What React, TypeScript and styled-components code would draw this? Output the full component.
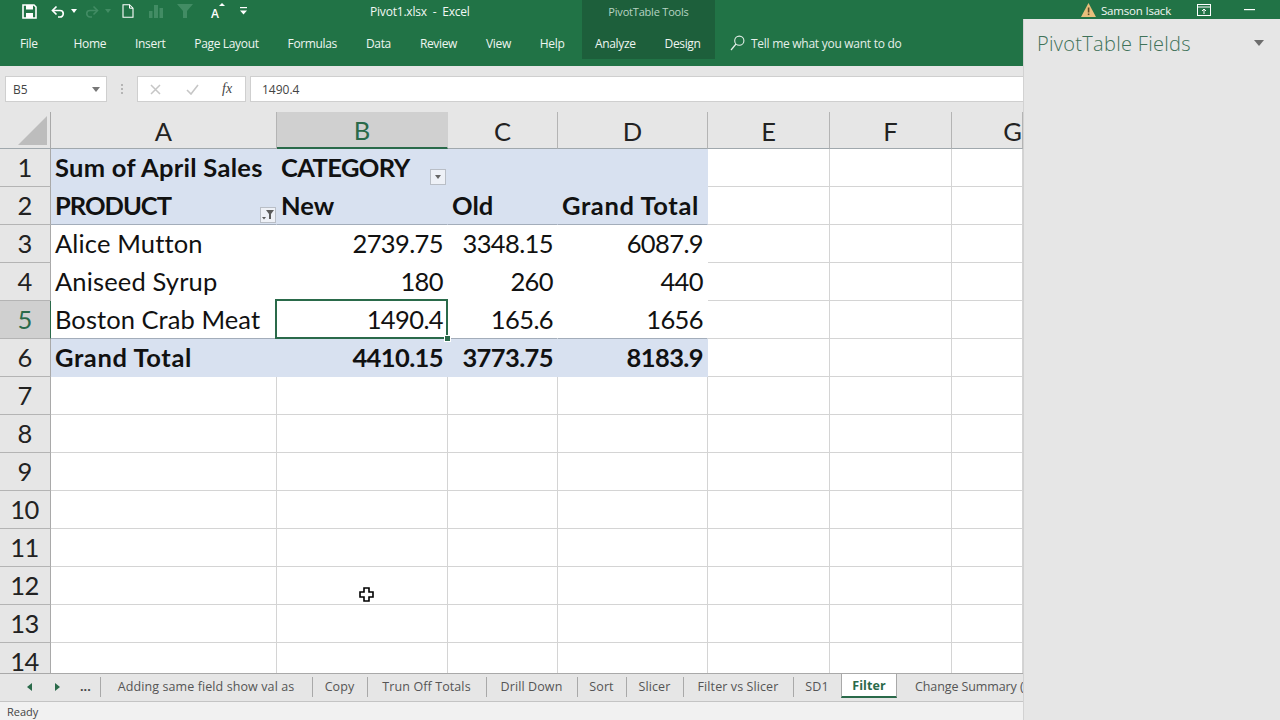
import React from "react";
import styled, { createGlobalStyle } from "styled-components";

const Global = createGlobalStyle`
  html, body { margin: 0; padding: 0; width: 1280px; height: 720px; overflow: hidden; background: #fff; }
  #root { width: 1280px; height: 720px; }
  * { box-sizing: border-box; }
`;

const UI = `"Open Sans", "Noto Sans", sans-serif`;
const SHEET = `Lato, "Liberation Sans", sans-serif`;

const Window = styled.div`
  position: relative; width: 1280px; height: 720px; overflow: hidden;
  display: flex; flex-direction: column; font-family: ${UI};
`;
const Header = styled.header`
  flex: 0 0 66px; display: flex; background: #217346; color: #fff; font-size: 12px;
`;
const HeaderLeft = styled.div`width: 582px; display: flex; flex-direction: column;`;
const HeaderContext = styled.div`
  width: 133px; height: 59px; background: #1d5f3b; display: flex; flex-direction: column;
`;
const HeaderRight = styled.div`flex: 1; display: flex; flex-direction: column;`;
const TopRow = styled.div`height: 22px; display: flex; align-items: center;`;
const TabRow = styled.div`height: 44px; display: flex; align-items: center; padding-bottom: 2px;`;
const Qat = styled.div`display: flex; align-items: center; padding-left: 22px; width: 370px;`;
const QatSlot = styled.span<{ $w: number }>`
  width: ${(p) => p.$w}px; display: flex; align-items: center; height: 22px;
`;
const Title = styled.div`font-size: 12px; letter-spacing: -0.2px; white-space: pre; color: #f2f7f4;`;
const RibbonTab = styled.div<{ $pad?: number }>`
  padding: 0 ${(p) => p.$pad ?? 14.5}px; font-size: 12px; letter-spacing: -0.35px; color: #eef5f0; white-space: nowrap;
`;
const FileTab = styled(RibbonTab)`padding: 0 21.5px 0 20px;`;
const ContextTitle = styled.div`
  height: 20px; margin-top: 1px; display: flex; align-items: center; justify-content: center;
  font-size: 11px; letter-spacing: -0.2px; color: #b7d3c2;
`;
const ContextTabs = styled.div`
  height: 38px; display: flex; align-items: center; padding-top: 6px;
`;
const Search = styled.div`
  display: flex; align-items: center; gap: 6px; padding-left: 15px; font-size: 12px; letter-spacing: -0.27px; color: #e5efe9;
`;
const UserArea = styled.div`
  margin-left: 366px; padding-bottom: 2px; display: flex; align-items: center; font-size: 11.5px; letter-spacing: -0.2px;
`;
const UserName = styled.span`margin: 0 26px 0 5px; color: #f2f7f4;`;
const WindowGap = styled.span`width: 33px;`;

const FormulaBand = styled.div`
  flex: 0 0 46px; background: #e6e6e6; display: flex; align-items: flex-start; padding: 10px 0 0 5px;
`;
const NameBox = styled.div`
  width: 102px; height: 26px; background: #fff; border: 1px solid #cfcfcf; display: flex; align-items: center;
  justify-content: space-between; padding: 0 6px 0 7px; font-size: 12px; color: #444;
`;
const Caret = styled.span`
  width: 0; height: 0; border-left: 4px solid transparent; border-right: 4px solid transparent;
  border-top: 5px solid #777;
`;
const SmallCaret = styled.span`
  width: 0; height: 0; border-left: 3px solid transparent; border-right: 3px solid transparent;
  border-top: 4px solid #666;
`;
const Grip = styled.div`
  width: 30px; height: 26px; display: flex; flex-direction: column; align-items: center; justify-content: center; gap: 2px;
`;
const GripDot = styled.span`width: 2px; height: 2px; background: #b5b5b5;`;
const FxBox = styled.div`
  width: 109px; height: 26px; background: #fff; border: 1px solid #cfcfcf; display: flex; align-items: center;
  padding-left: 12px;
`;
const FxGap = styled.span`width: 25px;`;
const FxGlyph = styled.span`
  font-family: "Liberation Serif", serif; font-style: italic; font-size: 14px; color: #444; margin-left: 23px;
`;
const FormulaInput = styled.div`
  margin-left: 4px; width: 773px; height: 26px; background: #fff; border: 1px solid #cfcfcf; border-right: 0; display: flex; align-items: center;
  padding-left: 11px; font-size: 12px; color: #444;
`;

const Sheet = styled.div`
  flex: 0 0 561px; width: 1023px; overflow: hidden; display: grid;
  grid-template-columns: 51px 226px 171px 110px 150px 122px 122px 71px;
  grid-template-rows: 37px;
  grid-auto-rows: 38px;
  background: #fff; font-family: ${SHEET}; font-size: 25.5px; color: #111;
`;
const Corner = styled.div`
  background: #e6e6e6; border-right: 1px solid #a9a9a9; border-bottom: 1px solid #a0a8ad; display: flex; padding: 4px 3px 0 18px;
`;
const ColHead = styled.div<{ $active?: boolean; $last?: boolean }>`
  background: ${(p) => (p.$active ? "#d0d0d0" : "#e6e6e6")};
  color: ${(p) => (p.$active ? "#2a6a4a" : "#222")};
  border-right: 1px solid ${(p) => (p.$active ? "#d0d0d0" : "#b4b4b4")};
  border-bottom: ${(p) => (p.$active ? "2px solid #2a6a4a" : "1px solid #a0a8ad")};
  display: flex; align-items: center; justify-content: ${(p) => (p.$last ? "flex-end" : "center")};
  padding-top: 1px;
`;
const RowHead = styled.div<{ $active?: boolean }>`
  background: ${(p) => (p.$active ? "#d0d0d0" : "#e6e6e6")};
  color: ${(p) => (p.$active ? "#2a6a4a" : "#222")};
  border-right: 1px solid ${(p) => (p.$active ? "#2a6a4a" : "#a9a9a9")};
  border-bottom: 1px solid #b4b4b4;
  display: flex; align-items: center; justify-content: center; padding-right: 1px; padding-bottom: 1px;
  letter-spacing: -0.6px;
`;
const Cell = styled.div<{
  $pivot?: boolean; $plain?: boolean; $bold?: boolean; $right?: boolean; $under?: boolean; $selected?: boolean; $ls?: number;
}>`
  position: relative; display: flex; align-items: center; white-space: nowrap; padding: 0 4px 2px;
  justify-content: ${(p) => (p.$right ? "flex-end" : "flex-start")};
  font-weight: ${(p) => (p.$bold ? 700 : 400)};
  letter-spacing: ${(p) => p.$ls ?? 0}px;
  background: ${(p) => (p.$pivot ? "#d8e1f0" : "#fff")};
  border-right: 1px solid ${(p) => (p.$pivot || p.$plain ? "transparent" : "#d4d4d4")};
  border-bottom: 1px solid ${(p) => (p.$under ? "#a3adba" : p.$pivot || p.$plain ? "transparent" : "#d4d4d4")};
  ${(p) =>
    p.$selected
      ? `z-index: 2; &::after { content: ""; position: absolute; left: -2px; top: -2px; right: -1px; bottom: -1px; border: 2px solid #2a6a4a; pointer-events: none; }
         &::before { content: ""; position: absolute; right: -3px; bottom: -3px; width: 5px; height: 5px; background: #2a6a4a; border: 1px solid #fff; box-sizing: content-box; margin: -1px; z-index: 3; }`
      : ""}
`;
const FilterButton = styled.span<{ $x: number; $y: number }>`
  position: absolute; right: ${(p) => p.$x}px; bottom: ${(p) => p.$y}px; width: 16px; height: 16px;
  background: #eef1f7; border: 1px solid #b9bec6; display: flex; align-items: center; justify-content: center;
`;
const Cursor = styled.span`
  position: absolute; left: 358px; top: 586px; width: 17px; height: 17px; display: flex; z-index: 3;
`;

const TabsBar = styled.div`
  flex: 0 0 29px; width: 1023px; background: #e6e6e6; border-top: 1px solid #a9a9a9; border-bottom: 1px solid #c4c4c4;
  display: flex; align-items: stretch; overflow: hidden; font-size: 12.5px; letter-spacing: 0.1px; color: #555; padding-bottom: 2px;
`;
const TabNav = styled.div`flex: 0 0 100px; display: flex; align-items: center; padding-left: 27px; gap: 23px;`;
const NavArrow = styled.span<{ $right?: boolean }>`
  width: 0; height: 0; border-top: 4px solid transparent; border-bottom: 4px solid transparent;
  ${(p) => (p.$right ? "border-left: 5px solid #2a6a4a;" : "border-right: 5px solid #2a6a4a;")}
`;
const Dots = styled.span`font-weight: 700; letter-spacing: 0; color: #444; margin-left: -3px;`;
const SheetTab = styled.div<{ $w: number }>`
  flex: 0 0 ${(p) => p.$w}px;
  position: relative; display: flex; align-items: center; justify-content: center; white-space: nowrap;
  &::after { content: ""; position: absolute; left: 0; top: 3px; bottom: 2px; width: 1px; background: #a9a9a9; }
`;
const ActiveTab = styled.div<{ $w: number }>`
  flex: 0 0 ${(p) => p.$w}px; height: 25px; margin-top: -1px; padding-top: 2px; background: #fff; color: #2a6a4a; font-weight: 700;
  display: flex; align-items: center; justify-content: center;
  border-bottom: 2px solid #2a6a4a; border-left: 1px solid #a9a9a9; border-right: 1px solid #a9a9a9;
`;
const LastTab = styled.div`padding-left: 18px; white-space: nowrap; display: flex; align-items: center; letter-spacing: -0.1px;`;
const StatusBar = styled.div`
  flex: 1; background: #f1f1f1; display: flex; align-items: center; padding-left: 7px; font-size: 11px; color: #444;
`;
const Panel = styled.aside`
  position: absolute; left: 1023px; top: 19px; width: 257px; bottom: 0; background: #e6e6e6;
  border-left: 1px solid #d2d2d2; display: flex; justify-content: space-between; align-items: flex-start;
  padding: 10px 16px 0 13px;
`;
const PanelTitle = styled.div`font-size: 20px; font-weight: 300; letter-spacing: 0.3px; color: #3f7259; line-height: 30px;`;
const PanelCaret = styled.span`margin-top: 11px; width: 0; height: 0;
  border-left: 5px solid transparent; border-right: 5px solid transparent; border-top: 6px solid #6d6d6d;`;
const QatLetter = styled.span`font-size: 12px; font-weight: 600; color: #fff; margin-top: 5px;`;

type CellData = { t?: string; bold?: boolean; right?: boolean; ls?: number };
type Row = { n: number; cells: CellData[]; pivot?: boolean; under?: boolean; plain?: boolean };

const NUM = -0.6;
const rows: Row[] = [
  { n: 1, pivot: true, cells: [{ t: "Sum of April Sales", bold: true, ls: 0.28 }, { t: "CATEGORY", bold: true, ls: -0.6 }, {}, {}] },
  { n: 2, pivot: true, under: true, cells: [{ t: "PRODUCT", bold: true, ls: -1 }, { t: "New", bold: true }, { t: "Old", bold: true }, { t: "Grand Total", bold: true, ls: 0.6 }] },
  { n: 3, plain: true, cells: [{ t: "Alice Mutton", ls: 0.15 }, { t: "2739.75", right: true, ls: NUM }, { t: "3348.15", right: true, ls: NUM }, { t: "6087.9", right: true, ls: NUM }] },
  { n: 4, plain: true, cells: [{ t: "Aniseed Syrup", ls: 0.15 }, { t: "180", right: true, ls: NUM }, { t: "260", right: true, ls: NUM }, { t: "440", right: true, ls: NUM }] },
  { n: 5, plain: true, under: true, cells: [{ t: "Boston Crab Meat", ls: 0.07 }, { t: "1490.4", right: true, ls: NUM }, { t: "165.6", right: true, ls: NUM }, { t: "1656", right: true, ls: NUM }] },
  { n: 6, pivot: true, cells: [{ t: "Grand Total", bold: true, ls: 0.6 }, { t: "4410.15", bold: true, right: true, ls: NUM }, { t: "3773.75", bold: true, right: true, ls: NUM }, { t: "8183.9", bold: true, right: true, ls: NUM }] },
];
const columns = ["A", "B", "C", "D", "E", "F", "G"];
const tabs = [
  { t: "Adding same field show val as", w: 212 },
  { t: "Copy", w: 55 },
  { t: "Trun Off Totals", w: 119 },
  { t: "Drill Down", w: 91 },
  { t: "Sort", w: 49 },
  { t: "Slicer", w: 57 },
  { t: "Filter vs Slicer", w: 110 },
  { t: "SD1", w: 48 },
];
const ribbonLeft = ["Home", "Insert", "Page Layout", "Formulas", "Data", "Review", "View", "Help"];
const DIM = "#428c64";

const SaveIcon = () => (
  <svg width="15" height="15" viewBox="0 0 15 15" fill="none">
    <path d="M1 1h11l2 2v11H1z" stroke="#fff" strokeWidth="1.6" />
    <rect x="4" y="1" width="7" height="4.5" fill="#fff" />
    <rect x="4" y="9" width="7" height="5" fill="#fff" />
  </svg>
);
const UndoIcon = () => (
  <svg width="14" height="13" viewBox="0 0 14 13" fill="none">
    <path d="M2 5.5h7a3.2 3.2 0 0 1 0 6.5H7" stroke="#fff" strokeWidth="1.7" />
    <path d="M5.5 1.5 1.5 5.5l4 4" stroke="#fff" strokeWidth="1.7" />
  </svg>
);
const RedoIcon = () => (
  <svg width="14" height="13" viewBox="0 0 14 13" fill="none">
    <path d="M12 5.5H5a3.2 3.2 0 0 0 0 6.5h2" stroke={DIM} strokeWidth="1.6" />
    <path d="M8.5 1.5l4 4-4 4" stroke={DIM} strokeWidth="1.6" />
  </svg>
);
const Mini = ({ c = "#fff" }: { c?: string }) => (
  <svg width="6" height="4" viewBox="0 0 6 4"><path d="M0 0h6L3 4z" fill={c} /></svg>
);
const PageIcon = () => (
  <svg width="12" height="14" viewBox="0 0 12 14" fill="none">
    <path d="M1 .7h6.5L11 4.2v9.1H1z" stroke="#fff" strokeWidth="1.1" />
    <path d="M7.5.7v3.5H11" stroke="#fff" strokeWidth="1" />
  </svg>
);
const BarsIcon = () => (
  <svg width="15" height="13" viewBox="0 0 15 13">
    <rect x="0" y="6" width="3.5" height="7" fill={DIM} />
    <rect x="5" y="0" width="4" height="13" fill={DIM} />
    <rect x="10.5" y="3" width="3.5" height="10" fill={DIM} />
  </svg>
);
const FunnelIcon = () => (
  <svg width="16" height="14" viewBox="0 0 16 14"><path d="M0 0h16l-6 7v7H6V7z" fill={DIM} /></svg>
);
const FontCaretIcon = () => (
  <svg width="6" height="12" viewBox="0 0 6 12" style={{ marginBottom: 4 }}>
    <path d="M0 3 3 0l3 3z" fill="#fff" />
  </svg>
);
const MoreIcon = () => (
  <svg width="7" height="8" viewBox="0 0 7 8">
    <rect x="0" y="0" width="7" height="1.2" fill="#fff" />
    <path d="M0 3.5h7L3.5 7.5z" fill="#fff" />
  </svg>
);
const SearchIcon = () => (
  <svg width="15" height="16" viewBox="0 0 15 16" fill="none">
    <circle cx="9.3" cy="5.7" r="4.6" stroke="#e5efe9" strokeWidth="1.1" />
    <path d="M6 9 1 15" stroke="#e5efe9" strokeWidth="1.2" />
  </svg>
);
const WarnIcon = () => (
  <svg width="15" height="14" viewBox="0 0 15 14">
    <path d="M7.5 0 15 14H0z" fill="#e8bf7c" />
    <rect x="6.8" y="4.5" width="1.6" height="5" fill="#5b4a25" />
    <rect x="6.8" y="10.5" width="1.6" height="1.6" fill="#5b4a25" />
  </svg>
);
const RibbonBoxIcon = () => (
  <svg width="14" height="12" viewBox="0 0 14 12" fill="none">
    <rect x=".5" y=".5" width="13" height="11" stroke="#fff" />
    <path d="M.5 3h13" stroke="#fff" />
    <path d="M7 10V5M5 7l2-2 2 2" stroke="#fff" />
  </svg>
);
const MinimizeIcon = () => (
  <svg width="11" height="2" viewBox="0 0 11 2"><rect width="11" height="1.2" fill="#fff" /></svg>
);
const CrossIcon = () => (
  <svg width="11" height="11" viewBox="0 0 11 11" fill="none">
    <path d="M1 1l9 9M10 1l-9 9" stroke="#c6c6c6" strokeWidth="1.5" />
  </svg>
);
const CheckIcon = () => (
  <svg width="13" height="11" viewBox="0 0 13 11" fill="none">
    <path d="M1 6l4 4 7-9" stroke="#c6c6c6" strokeWidth="1.6" />
  </svg>
);
const CornerIcon = () => (
  <svg width="29" height="29" viewBox="0 0 29 29"><path d="M29 0v29H0z" fill="#bdbdbd" /></svg>
);
const CursorIcon = () => (
  <svg width="17" height="17" viewBox="0 0 17 17">
    <path d="M6 2h5v4h4v5h-4v4H6v-4H2V6h4z" fill="#fff" stroke="#000" strokeWidth="1.6" />
  </svg>
);
const SmallFunnel = () => (
  <svg width="12" height="10" viewBox="0 0 12 10">
    <path d="M4 0h8L9 4v5H7V4z" fill="#5b5b5b" />
    <path d="M0 7h4L2 9.5z" fill="#5b5b5b" />
  </svg>
);

export default function App() {
  return (
    <Window>
      <Global />
      <Header>
        <HeaderLeft>
          <TopRow>
            <Qat>
              <QatSlot $w={29}><SaveIcon /></QatSlot>
              <QatSlot $w={20}><UndoIcon /></QatSlot>
              <QatSlot $w={14}><Mini /></QatSlot>
              <QatSlot $w={20}><RedoIcon /></QatSlot>
              <QatSlot $w={17}><Mini c={DIM} /></QatSlot>
              <QatSlot $w={27}><PageIcon /></QatSlot>
              <QatSlot $w={28}><BarsIcon /></QatSlot>
              <QatSlot $w={34}><FunnelIcon /></QatSlot>
              <QatSlot $w={29}><QatLetter>A</QatLetter><FontCaretIcon /></QatSlot>
              <QatSlot $w={10}><MoreIcon /></QatSlot>
            </Qat>
            <Title>Pivot1.xlsx  -  Excel</Title>
          </TopRow>
          <TabRow>
            <FileTab>File</FileTab>
            {ribbonLeft.map((t) => (
              <RibbonTab key={t}>{t}</RibbonTab>
            ))}
          </TabRow>
        </HeaderLeft>
        <HeaderContext>
          <ContextTitle>PivotTable Tools</ContextTitle>
          <ContextTabs>
            <RibbonTab $pad={13}>Analyze</RibbonTab>
            <RibbonTab $pad={16}>Design</RibbonTab>
          </ContextTabs>
        </HeaderContext>
        <HeaderRight>
          <TopRow>
            <UserArea>
              <WarnIcon />
              <UserName>Samson Isack</UserName>
              <RibbonBoxIcon />
              <WindowGap />
              <MinimizeIcon />
            </UserArea>
          </TopRow>
          <TabRow>
            <Search><SearchIcon />Tell me what you want to do</Search>
          </TabRow>
        </HeaderRight>
      </Header>

      <FormulaBand>
        <NameBox>B5<Caret /></NameBox>
        <Grip><GripDot /><GripDot /><GripDot /></Grip>
        <FxBox>
          <CrossIcon />
          <FxGap />
          <CheckIcon />
          <FxGlyph>fx</FxGlyph>
        </FxBox>
        <FormulaInput>1490.4</FormulaInput>
      </FormulaBand>

      <Sheet>
        <Corner><CornerIcon /></Corner>
        {columns.map((c) => (
          <ColHead key={c} $active={c === "B"} $last={c === "G"}>{c}</ColHead>
        ))}
        {rows.map((r) => (
          <React.Fragment key={r.n}>
            <RowHead $active={r.n === 5}>{r.n}</RowHead>
            {r.cells.map((c, i) => (
              <Cell
                key={i}
                $pivot={r.pivot}
                $plain={r.plain}
                $under={r.under}
                $bold={c.bold}
                $right={c.right}
                $ls={c.ls}
                $selected={r.n === 5 && i === 1}
              >
                {c.t}
                {r.n === 1 && i === 1 && (
                  <FilterButton $x={1} $y={1}><SmallCaret /></FilterButton>
                )}
                {r.n === 2 && i === 0 && (
                  <FilterButton $x={0} $y={1}><SmallFunnel /></FilterButton>
                )}
              </Cell>
            ))}
            <Cell /><Cell /><Cell />
          </React.Fragment>
        ))}
        {[7, 8, 9, 10, 11, 12, 13, 14].map((n) => (
          <React.Fragment key={n}>
            <RowHead>{n}</RowHead>
            {columns.map((c) => <Cell key={c} />)}
          </React.Fragment>
        ))}
      </Sheet>
      <Cursor><CursorIcon /></Cursor>

      <TabsBar>
        <TabNav>
          <NavArrow />
          <NavArrow $right />
          <Dots>...</Dots>
        </TabNav>
        {tabs.map((t) => <SheetTab key={t.t} $w={t.w}>{t.t}</SheetTab>)}
        <ActiveTab $w={56}>Filter</ActiveTab>
        <LastTab>Change Summary (</LastTab>
      </TabsBar>
      <StatusBar>Ready</StatusBar>

      <Panel>
        <PanelTitle>PivotTable Fields</PanelTitle>
        <PanelCaret />
      </Panel>
    </Window>
  );
}
